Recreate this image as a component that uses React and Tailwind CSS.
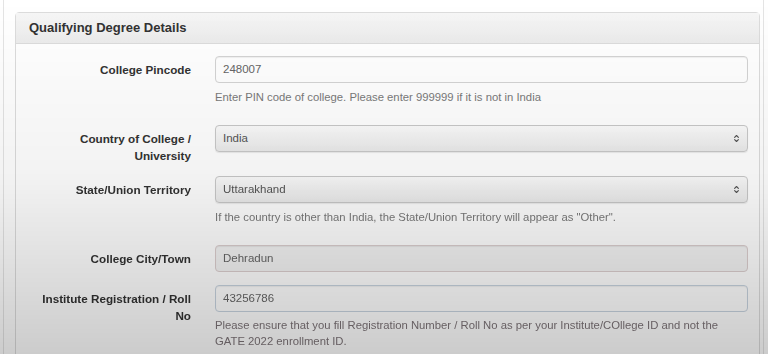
import { ChevronsUpDown } from "lucide-react";

const font = { fontFamily: '"Liberation Sans", Arial, sans-serif' };

function Label({ children }) {
  return (
    <div className="w-[175px] shrink-0 pt-[5px] text-right text-[11.7px] font-bold leading-[17px] text-[#333]">
      {children}
    </div>
  );
}

function Help({ children }) {
  return <p className="mt-[6px] mb-[7px] text-[11.3px] leading-[16px] text-[#7a7a7a]">{children}</p>;
}

function TextInput({ value, className = "" }) {
  return (
    <div
      className={`flex h-[27px] items-center rounded-[4px] border px-[7px] text-[11.5px] text-[#666] shadow-[inset_0_1px_1px_rgba(0,0,0,0.06)] ${className}`}
    >
      {value}
    </div>
  );
}

function Select({ value }) {
  return (
    <div className="flex h-[27px] items-center justify-between rounded-[4px] border border-[#c9c9c9] bg-linear-to-b from-[#fbfbfb] to-[#ebebeb] pl-[7px] pr-[6px] text-[11.5px] text-[#555] shadow-[0_1px_1px_rgba(0,0,0,0.08)]">
      <span>{value}</span>
      <ChevronsUpDown className="size-[9px] text-[#555]" strokeWidth={3} />
    </div>
  );
}

function Row({ label, children, className = "" }) {
  return (
    <div className={`flex ${className}`}>
      <Label>{label}</Label>
      <div className="ml-[24px] w-[533px]">{children}</div>
    </div>
  );
}

export default function App() {
  return (
    <div className="relative h-[354px] w-[768px] overflow-hidden bg-white" style={font}>
      <div className="h-full blur-[0.5px]">
        <div className="ml-[3px] mr-[4px] h-full border-x border-[#e4e4e4] pl-[11px] pr-[3px] pt-[12px]">
          <div className="h-[400px] rounded-t-[4px] border border-[#dcdcdc] bg-white">
            <div className="flex h-[31px] items-center border-b border-[#dcdcdc] bg-linear-to-b from-[#f6f6f6] to-[#ececec] pl-[13px] text-[13px] font-bold text-[#333]">
              Qualifying Degree Details
            </div>

            <div className="pt-[12px]">
              <Row label="College Pincode" className="mb-[13px]">
                <TextInput value="248007" className="border-[#d4d4d4] bg-white" />
                <Help>Enter PIN code of college. Please enter 999999 if it is not in India</Help>
              </Row>

              <Row label={<>Country of College /<br />University</>} className="mb-[12px]">
                <Select value="India" />
              </Row>

              <Row label="State/Union Territory" className="mb-[13px]">
                <Select value="Uttarakhand" />
                <Help>If the country is other than India, the State/Union Territory will appear as "Other".</Help>
              </Row>

              <Row label="College City/Town" className="mb-[13px]">
                <TextInput value="Dehradun" className="border-[#dccfcf] bg-[#f4f4f4]" />
              </Row>

              <Row label={<>Institute Registration / Roll<br />No</>}>
                <TextInput value="43256786" className="border-[#c8d4e0] bg-white" />
                <p className="mt-[5px] text-[11.3px] leading-[16px] text-[#7d7478]">
                  Please ensure that you fill Registration Number / Roll No as per your Institute/COllege ID and not the
                  GATE 2022 enrollment ID.
                </p>
              </Row>
            </div>
          </div>
        </div>
      </div>
      <div className="pointer-events-none absolute inset-0 bg-linear-to-b from-transparent via-black/5 to-black/20" />
    </div>
  );
}
